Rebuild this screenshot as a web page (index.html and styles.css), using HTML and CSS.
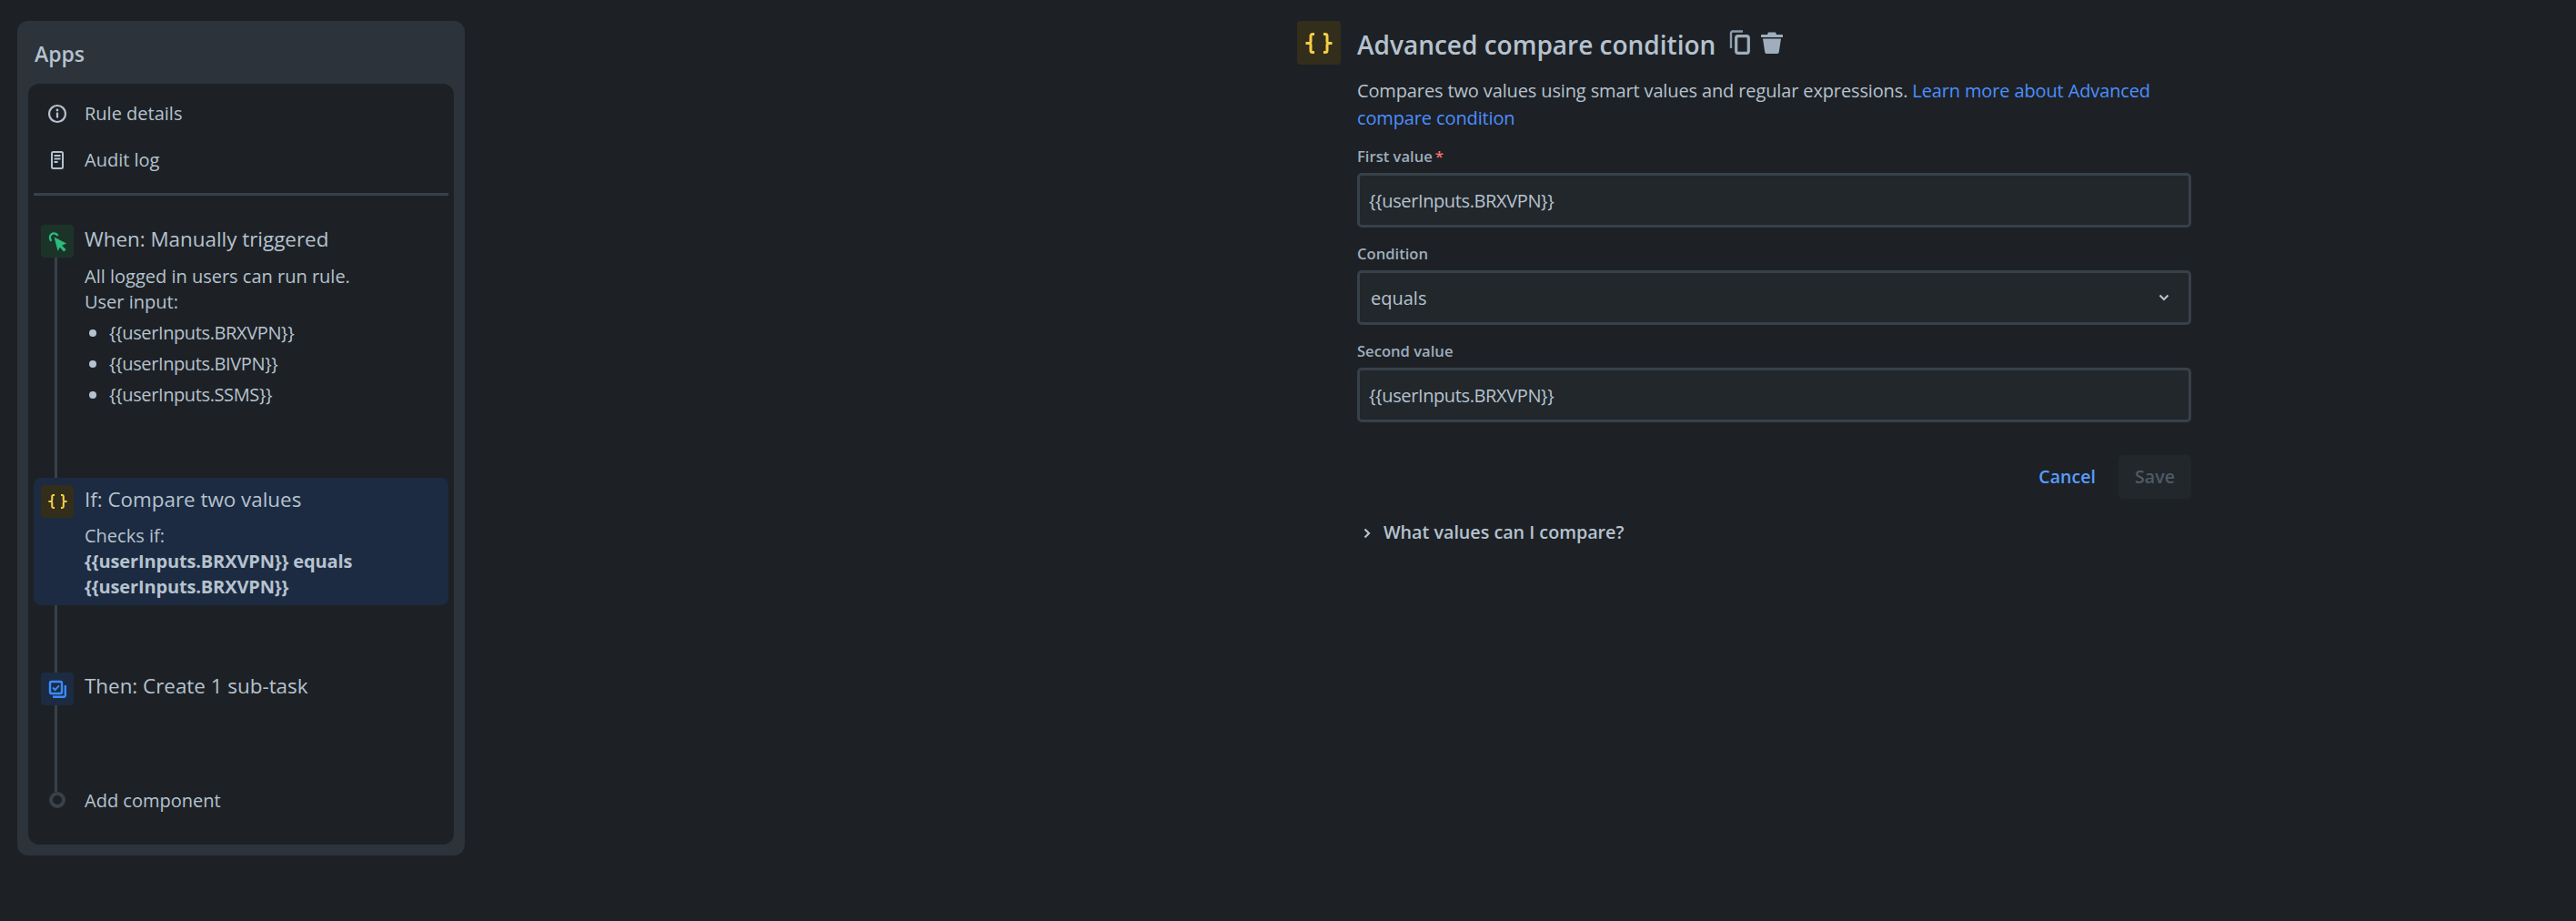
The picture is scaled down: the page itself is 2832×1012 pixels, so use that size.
FILE: index.html
```html
<!DOCTYPE html>
<html lang="en">
<head>
<meta charset="utf-8">
<title>Advanced compare condition</title>
<link rel="stylesheet" href="styles.css">
</head>
<body>
<div class="page">
  <aside class="panel">
    <h2 class="panel-title">Apps</h2>
    <div class="panel-inner">
      <nav class="nav">
        <a class="nav-row">
          <span class="nav-icon"><svg width="22" height="22" viewBox="0 0 22 22"><circle cx="11" cy="11" r="9" fill="none" stroke="currentColor" stroke-width="2.2"/><circle cx="11" cy="7" r="1.4" fill="currentColor"/><rect x="9.9" y="9.6" width="2.2" height="6" rx="0.6" fill="currentColor"/></svg></span>
          <span>Rule details</span>
        </a>
        <a class="nav-row">
          <span class="nav-icon"><svg width="14" height="20" viewBox="0 0 14 20"><rect x="1" y="1" width="12" height="18" rx="1.5" fill="none" stroke="currentColor" stroke-width="2"/><rect x="3.5" y="4" width="7" height="2" fill="currentColor"/><rect x="3.5" y="7.5" width="7" height="2" fill="currentColor"/><rect x="3.5" y="11" width="4" height="2" fill="currentColor"/></svg></span>
          <span>Audit log</span>
        </a>
      </nav>
      <div class="divider"></div>
      <div class="steps">
        <div class="step-line"></div>
        <section class="step step-when">
          <span class="step-icon icon-green"><svg width="36" height="36" viewBox="0 0 36 36"><path d="M11.6 17.6A4.6 4.6 0 1 1 18.6 12" fill="none" stroke="currentColor" stroke-width="2.3"/><path d="M14.5 13.5L28 20.5 23 22.8 27.6 27.2 25.2 29.4 20.8 24.8 18.6 29Z" fill="currentColor"/></svg></span>
          <div class="step-body">
            <h3 class="step-title step-title-low">When: Manually triggered</h3>
            <p class="step-text">All logged in users can run rule.<br>User input:</p>
            <ul class="inputs">
              <li>{{userInputs.BRXVPN}}</li>
              <li>{{userInputs.BIVPN}}</li>
              <li>{{userInputs.SSMS}}</li>
            </ul>
          </div>
        </section>
        <section class="step step-if">
          <span class="step-icon icon-amber"><svg class="braces-small" viewBox="0 0 30 23"><path d="M10 1.500H8a2 2 0 0 0-2 2V9.500a2 2 0 0 1-2 2H.5M4 11.500a2 2 0 0 1 2 2V19.500a2 2 0 0 0 2 2h2M20 1.500H22a2 2 0 0 1 2 2V9.500a2 2 0 0 0 2 2h3.500M26 11.500a2 2 0 0 0-2 2V19.500a2 2 0 0 1-2 2h-2" fill="none" stroke="currentColor" stroke-width="3"/></svg></span>
          <div class="step-body">
            <h3 class="step-title step-title-low">If: Compare two values</h3>
            <p class="step-text">Checks if:<br><strong>{{userInputs.BRXVPN}} equals<br>{{userInputs.BRXVPN}}</strong></p>
          </div>
        </section>
        <section class="step step-then">
          <span class="step-icon icon-blue"><svg width="36" height="36" viewBox="0 0 36 36"><rect x="10" y="10" width="13" height="13" rx="1.5" fill="none" stroke="currentColor" stroke-width="2.4"/><path d="M13 26.7H25a1.8 1.8 0 0 0 1.8-1.8V14" fill="none" stroke="currentColor" stroke-width="2.4"/><path d="M13 16.5l2.6 2.5 4.4-4.6" fill="none" stroke="currentColor" stroke-width="2"/></svg></span>
          <div class="step-body"><h3 class="step-title">Then: Create 1 sub-task</h3></div>
        </section>
        <section class="step step-add">
          <span class="step-icon"><span class="add-dot"></span></span>
          <span class="add-label">Add component</span>
        </section>
      </div>
    </div>
  </aside>

  <main class="editor">
    <span class="editor-icon"><svg class="braces-large" viewBox="0 0 30 23"><path d="M10 1.500H8a2 2 0 0 0-2 2V9.500a2 2 0 0 1-2 2H.5M4 11.500a2 2 0 0 1 2 2V19.500a2 2 0 0 0 2 2h2M20 1.500H22a2 2 0 0 1 2 2V9.500a2 2 0 0 0 2 2h3.500M26 11.500a2 2 0 0 0-2 2V19.500a2 2 0 0 1-2 2h-2" fill="none" stroke="currentColor" stroke-width="3"/></svg></span>
    <div class="editor-main">
      <header class="editor-head">
        <h1 class="editor-title">Advanced compare condition</h1>
        <svg class="act-copy" width="23" height="27" viewBox="0 0 23 27"><path d="M2 20V3.200A1.700 1.700 0 0 1 3.700 1.500H15" fill="none" stroke="#8c9bab" stroke-width="2.400"/><rect x="7.700" y="6.700" width="13.600" height="18.600" rx="2" fill="none" stroke="#9fadbc" stroke-width="3.200"/></svg>
        <svg class="act-trash" width="24" height="24" viewBox="0 0 24 24"><path d="M8 .5h8L17 3h6.500a.5.5 0 0 1 .5.5V6H0V3.500a.5.5 0 0 1 .5-.5H7Z" fill="#9fadbc"/><path d="M2 7.500H22L19.800 22a2 2 0 0 1-2 2H6.200a2 2 0 0 1-2-2Z" fill="#9fadbc"/></svg>
      </header>
      <p class="editor-desc">Compares two values using smart values and regular expressions. <a class="link">Learn more about Advanced</a><br><a class="link">compare condition</a></p>
      <form class="form">
        <div class="field">
          <label class="field-label">First value<span class="req">*</span></label>
          <input class="control" type="text" value="{{userInputs.BRXVPN}}">
        </div>
        <div class="field">
          <label class="field-label">Condition</label>
          <div class="control control-select">
            <span class="select-value">equals</span>
            <svg width="12" height="8" viewBox="0 0 12 8"><path d="M1.500 1.500L6 6l4.500-4.500" fill="none" stroke="#b6c2cf" stroke-width="2.200"/></svg>
          </div>
        </div>
        <div class="field">
          <label class="field-label">Second value</label>
          <input class="control" type="text" value="{{userInputs.BRXVPN}}">
        </div>
        <div class="actions">
          <a class="btn-cancel">Cancel</a>
          <span class="btn-save">Save</span>
        </div>
      </form>
      <div class="expander">
        <span class="expander-icon"><svg width="8" height="12" viewBox="0 0 8 12"><path d="M1.500 1.500L6 6l-4.500 4.500" fill="none" stroke="#b6c2cf" stroke-width="2.200"/></svg></span>
        <span>What values can I compare?</span>
      </div>
    </div>
  </main>
</div>
</body>
</html>
```
FILE: styles.css
```css
* { box-sizing: border-box; }
html, body { margin: 0; height: 100%; }
body {
  background: #1d2125;
  color: #b6c2cf;
  font-family: "Open Sans", "Noto Sans", sans-serif;
  font-size: 20px;
  line-height: 28px;
  overflow: hidden;
}
h1, h2, h3, p, ul { margin: 0; padding: 0; font-weight: 400; }

.page { display: flex; align-items: flex-start; }

/* left panel */
.panel {
  margin: 23px 0 0 19px;
  width: 492px;
  height: 917px;
  padding: 0 12px 12px;
  background: #2c333a;
  border-radius: 12px;
  display: flex;
  flex-direction: column;
}
.panel-title {
  height: 69px;
  padding: 21px 0 0 7px;
  font-size: 23px;
  line-height: 30px;
  font-weight: 600;
}
.panel-inner {
  flex: 1;
  background: #1d2125;
  border-radius: 12px;
  padding-top: 7px;
}
.nav-row { display: flex; align-items: center; gap: 12px; height: 51px; padding-left: 14px; }
.nav-icon { width: 36px; display: flex; justify-content: center; }
.divider { height: 3px; margin: 11px 6px 0; background: #38414a; }

.steps { position: relative; margin: 32px 6px 0; }
.step-line {
  position: absolute;
  left: 23px;
  top: 36px;
  bottom: 27px;
  width: 3px;
  background: #38414a;
}
.step { position: relative; display: flex; gap: 12px; padding: 0 8px; }
.step-icon {
  flex: none;
  width: 36px;
  height: 36px;
  border-radius: 4px;
  display: flex;
  align-items: center;
  justify-content: center;
}
.icon-green { background: #1c3329; color: #2abb7f; }
.icon-amber { background: #332e1b; color: #f5cd47; }
.icon-blue { background: #1c2b41; color: #388bff; }
.braces-small { width: 21px; height: 16px; }
.step-title { font-size: 22.4px; line-height: 30px; }
.step-title-low { padding-top: 1px; }
.step-text { margin-top: 12px; }
.step-when { height: 204px; }
.inputs { margin-top: 3px; padding-left: 27px; list-style: none; }
.inputs li { position: relative; height: 34px; line-height: 34px; letter-spacing: -0.38px; }
.inputs li::before {
  content: "";
  position: absolute;
  left: -22px;
  top: 13px;
  width: 8px;
  height: 8px;
  border-radius: 50%;
  background: #b6c2cf;
}
.step-if {
  margin-top: 74px;
  height: 140px;
  padding-top: 8px;
  background: #1c2b41;
  border-radius: 8px;
}
.step-if .step-text { margin-top: 11px; }
.step-if strong { font-weight: 700; letter-spacing: -0.14px; }
.step-then { margin-top: 74px; }
.step-add { margin-top: 86px; align-items: center; }
.add-dot { width: 18px; height: 18px; border: 4px solid #38414a; border-radius: 50%; background: #1d2125; }
.add-label { padding-top: 2px; }

/* right editor */
.editor { display: flex; gap: 18px; margin: 23px 0 0 915px; width: 983px; }
.editor-icon {
  flex: none;
  width: 48px;
  height: 48px;
  border-radius: 4px;
  background: #332e1b;
  color: #f5cd47;
  display: flex;
  align-items: center;
  justify-content: center;
}
.braces-large { width: 30px; height: 23px; }
.editor-main { flex: 1; min-width: 0; }
.editor-head { display: flex; align-items: center; height: 52px; }
.editor-title { font-size: 28px; line-height: 36px; font-weight: 600; }
.act-copy { margin-left: 15px; margin-top: -6px; }
.act-trash { margin-left: 12px; margin-top: -4px; }
.editor-desc { margin-top: 10px; line-height: 30px; letter-spacing: -0.13px; }
.link { color: #4c8eff; }

.form { margin-top: 16px; }
.field { margin-bottom: 18px; }
.field-label { display: block; height: 29px; font-size: 16.6px; line-height: 22px; font-weight: 600; color: #9fadbc; }
.req { margin-left: 3px; color: #f87168; }
.control {
  display: block;
  width: 100%;
  height: 60px;
  padding: 0 10px;
  background: #22272b;
  border: 3px solid #38414a;
  border-radius: 5px;
  color: #b6c2cf;
  font: inherit;
  letter-spacing: -0.38px;
  outline: none;
}
.control-select {
  display: flex;
  align-items: center;
  justify-content: space-between;
  padding: 0 21px 0 12px;
  letter-spacing: 0;
}
.select-value { padding-top: 2px; }
.actions { display: flex; justify-content: flex-end; align-items: center; gap: 25px; margin-top: 36px; font-weight: 600; font-size: 19.6px; }
.btn-cancel { color: #579dff; }
.btn-save {
  width: 80px;
  height: 48px;
  display: flex;
  align-items: center;
  justify-content: center;
  border-radius: 5px;
  background: #22272b;
  color: #4e5a66;
}
.expander { display: flex; align-items: center; gap: 7px; margin-top: 23px; font-weight: 600; font-size: 19.7px; }
.expander-icon { width: 22px; display: flex; justify-content: center; padding-top: 1px; }
```
